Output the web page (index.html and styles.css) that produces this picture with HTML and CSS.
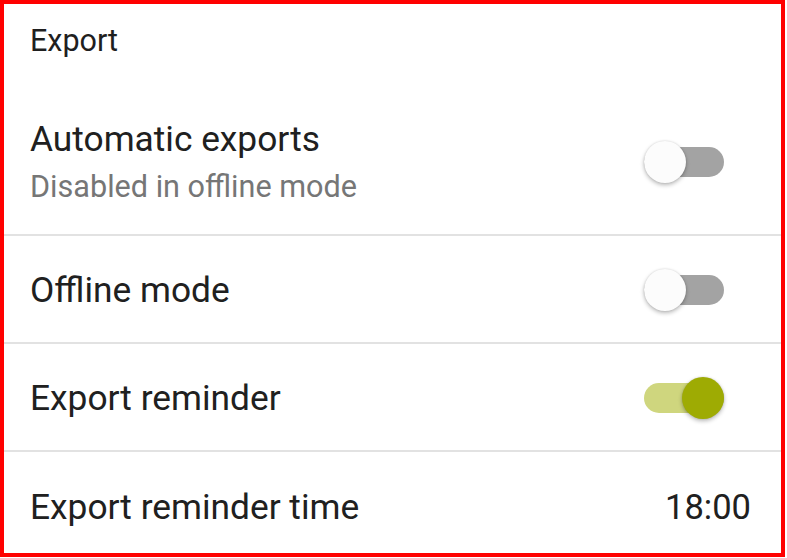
FILE: index.html
```html
<!DOCTYPE html>
<html>
<head>
<meta charset="utf-8">
<link rel="stylesheet" href="styles.css">
</head>
<body>
<div class="frame">
  <div class="category">Export</div>
  <div class="row row-tall">
    <div class="texts">
      <div class="title">Automatic exports</div>
      <div class="summary">Disabled in offline mode</div>
    </div>
    <div class="switch"><span class="track"></span><span class="thumb"></span></div>
  </div>
  <div class="row">
    <div class="texts"><div class="title">Offline mode</div></div>
    <div class="switch"><span class="track"></span><span class="thumb"></span></div>
  </div>
  <div class="row">
    <div class="texts"><div class="title">Export reminder</div></div>
    <div class="switch on"><span class="track"></span><span class="thumb"></span></div>
  </div>
  <div class="row last">
    <div class="texts"><div class="title">Export reminder time</div></div>
    <div class="value">18:00</div>
  </div>
</div>
</body>
</html>
```

FILE: styles.css
```css
html, body {
  margin: 0;
  padding: 0;
  background: #ffffff;
}

.frame {
  width: 785px;
  height: 557px;
  box-sizing: border-box;
  border: 4px solid #ff0000;
  overflow: hidden;
  background: #ffffff;
  font-family: Roboto, "Noto Sans", sans-serif;
  color: #212121;
}

.category {
  height: 86px;
  box-sizing: border-box;
  padding: 19px 26px 0;
  font-size: 30.5px;
  line-height: 36px;
  color: #1f1f1f;
}

.row {
  height: 108px;
  box-sizing: border-box;
  display: flex;
  align-items: center;
  justify-content: space-between;
  padding: 2px 30px 0 26px;
  border-bottom: 2px solid #e2e2e2;
}

.row-tall {
  height: 146px;
  padding-top: 0;
}

.row.last {
  border-bottom: none;
  flex-shrink: 0;
}

.texts {
  display: flex;
  flex-direction: column;
  gap: 9px;
}

.title {
  font-size: 35.3px;
  line-height: 41px;
  color: #202020;
}

.summary {
  font-size: 30.6px;
  line-height: 36px;
  color: #767676;
}

.switch {
  position: relative;
  width: 80px;
  height: 44px;
  margin-right: 27px;
  flex-shrink: 0;
}

.track {
  position: absolute;
  left: 0;
  right: 0;
  top: 7px;
  height: 30px;
  border-radius: 15px;
  background: #a3a3a3;
}

.thumb {
  position: absolute;
  left: 0;
  top: 1px;
  width: 42px;
  height: 42px;
  border-radius: 50%;
  background: #fcfcfc;
  box-shadow: 0 2px 4px rgba(0, 0, 0, 0.28), 0 0 2px rgba(0, 0, 0, 0.12);
}

.switch.on .track {
  background: #cfd67e;
}

.switch.on .thumb {
  left: auto;
  right: 0;
  background: #9eab03;
}

.value {
  font-size: 34.5px;
  line-height: 41px;
  color: #202020;
}
```
